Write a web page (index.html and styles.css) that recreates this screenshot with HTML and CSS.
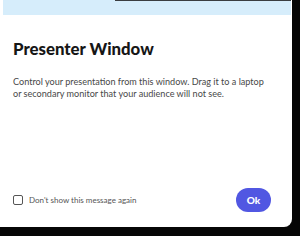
FILE: index.html
```html
<!DOCTYPE html>
<html>
<head>
<meta charset="utf-8">
<link rel="stylesheet" href="styles.css">
</head>
<body>
<div class="page">
  <div class="band">
    <div class="band-left"></div>
    <div class="band-right"></div>
  </div>
  <div class="dialog">
    <h1 class="title">Presenter Window</h1>
    <p class="text">Control your presentation from this window. Drag it to a laptop or secondary monitor that your audience will not see.</p>
    <div class="footer">
      <label class="check">
        <span class="box"></span>
        <span class="label">Don't show this message again</span>
      </label>
      <button class="ok">Ok</button>
    </div>
  </div>
</div>
</body>
</html>
```
FILE: styles.css
```css
html, body {
  margin: 0;
  padding: 0;
}
body {
  width: 300px;
  height: 236px;
  background: #060606;
  overflow: hidden;
  font-family: Lato, "Liberation Sans", sans-serif;
}
.page {
  width: 292px;
  height: 227px;
  background: #ffffff;
  border-bottom-right-radius: 8px;
  display: flex;
  flex-direction: column;
}
.band {
  display: flex;
  height: 15px;
  margin-left: 3px;
  margin-right: 1px;
}
.band-left {
  width: 112px;
  background: #d6edfb;
}
.band-right {
  flex: 1;
  background: #d6edfb;
  border-top: 1px solid #3a3d40;
}
.dialog {
  flex: 1;
  display: flex;
  flex-direction: column;
  padding: 0 21px 15px 13px;
}
.title {
  margin: 24px 0 0 0;
  font-size: 16.8px;
  font-weight: 900;
  color: #161616;
  line-height: 20px;
}
.text {
  margin: 17px 0 0 0;
  font-size: 9.1px;
  line-height: 12px;
  color: #484848;
}
.footer {
  margin-top: auto;
  display: flex;
  align-items: center;
  justify-content: space-between;
}
.check {
  display: flex;
  align-items: center;
  gap: 6px;
}
.box {
  width: 8px;
  height: 8px;
  border: 1.5px solid #555;
  border-radius: 2px;
}
.label {
  font-size: 8px;
  color: #555;
}
.ok {
  width: 35px;
  height: 24px;
  border: none;
  border-radius: 12px;
  background: #5157e2;
  color: #fff;
  font-family: inherit;
  font-weight: 900;
  font-size: 10px;
  padding: 0;
}
```
